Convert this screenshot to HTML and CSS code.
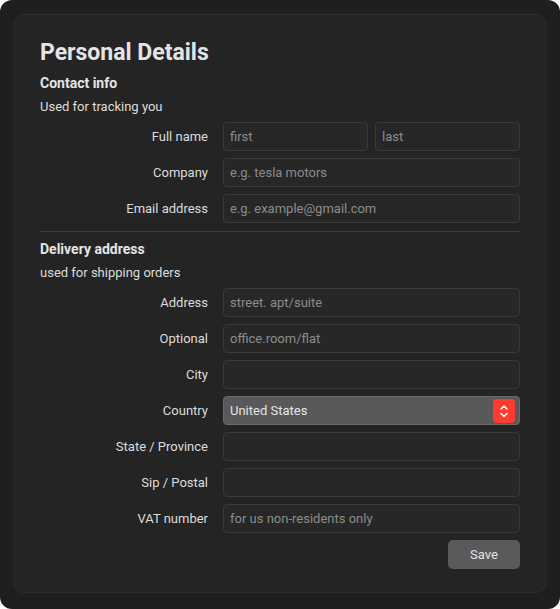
FILE: index.html
```html
<!DOCTYPE html>
<html lang="en">
<head>
    <meta charset="UTF-8">
    <meta name="viewport" content="width=device-width, initial-scale=1.0">
    <title>Personal Details</title>
    <link rel="stylesheet" href="styles.css">
</head>
<body>
    <div class="window">
        <div class="card">
            <h1>Personal Details</h1>

            <h2>Contact info</h2>
            <p class="note">Used for tracking you</p>
            <div class="form-grid">
                <label>Full name</label>
                <div class="pair">
                    <input type="text" placeholder="first">
                    <input type="text" placeholder="last">
                </div>
                <label>Company</label>
                <input type="text" placeholder="e.g. tesla motors">
                <label>Email address</label>
                <input type="text" placeholder="e.g. example@gmail.com">
            </div>

            <hr class="divider">

            <h2>Delivery address</h2>
            <p class="note">used for shipping orders</p>
            <div class="form-grid">
                <label>Address</label>
                <input type="text" placeholder="street. apt/suite">
                <label>Optional</label>
                <input type="text" placeholder="office.room/flat">
                <label>City</label>
                <input type="text">
                <label>Country</label>
                <div class="select">
                    <span>United States</span>
                    <span class="select-arrows">
                        <svg width="22" height="24" viewBox="0 0 22 24">
                            <path d="M8 10 L11 7 L14 10" fill="none" stroke="#fff" stroke-width="1.6" stroke-linecap="round" stroke-linejoin="round"/>
                            <path d="M8 14.5 L11 17.5 L14 14.5" fill="none" stroke="#fff" stroke-width="1.6" stroke-linecap="round" stroke-linejoin="round"/>
                        </svg>
                    </span>
                </div>
                <label>State / Province</label>
                <input type="text">
                <label>Sip / Postal</label>
                <input type="text">
                <label>VAT number</label>
                <input type="text" placeholder="for us non-residents only">
            </div>

            <div class="actions">
                <button>Save</button>
            </div>
        </div>
    </div>
</body>
</html>
```

FILE: styles.css
```css
html, body {
    margin: 0;
    padding: 0;
    background-color: #ffffff;
}

body {
    font-family: Roboto, "Liberation Sans", sans-serif;
    color: #e2e2e2;
}

.window {
    height: 609px;
    box-sizing: border-box;
    padding: 14px;
    background-color: #1f1f1f;
    border-radius: 12px;
}

.card {
    background-color: #242424;
    border: 1px solid #2e2e2e;
    border-radius: 10px;
    padding: 24px 25px 23px 25px;
}

h1 {
    margin: 0;
    font-size: 23px;
    line-height: 28px;
    font-weight: 700;
    color: #e4e4e4;
}

h2 {
    margin: 6px 0 0 0;
    font-size: 14px;
    line-height: 20px;
    font-weight: 700;
    color: #e4e4e4;
}

.divider + h2 {
    margin-top: 7px;
}

.note {
    margin: 5px 0 6px 0;
    font-size: 13px;
    line-height: 18px;
    color: #dcdcdc;
}

.form-grid {
    display: grid;
    grid-template-columns: 168px 1fr;
    column-gap: 15px;
    row-gap: 7px;
    align-items: center;
}

.form-grid label {
    text-align: right;
    font-size: 13px;
    color: #dcdcdc;
}

.pair {
    display: flex;
    gap: 7px;
}

.pair input {
    flex: 1;
    min-width: 0;
}

input {
    box-sizing: border-box;
    height: 29px;
    width: 100%;
    padding: 0 6px;
    font-family: Roboto, "Liberation Sans", sans-serif;
    font-size: 13px;
    color: #e2e2e2;
    background-color: #272727;
    border: 1px solid #3a3a3a;
    border-radius: 4px;
    outline: none;
}

input::placeholder {
    color: #8c8c8c;
}

.select {
    box-sizing: border-box;
    height: 29px;
    display: flex;
    align-items: center;
    justify-content: space-between;
    padding: 0 4px 0 6px;
    font-size: 13px;
    color: #e4e4e4;
    background-color: #595959;
    border: 1px solid #6a6a6a;
    border-radius: 4px;
}

.select-arrows {
    display: flex;
    width: 22px;
    height: 24px;
    background-color: #ff3b30;
    border-radius: 4px;
}

.divider {
    margin: 8px 0 0 0;
    border: none;
    border-top: 1px solid #3a3a3a;
}

.actions {
    display: flex;
    justify-content: flex-end;
    margin-top: 7px;
}

.actions button {
    width: 72px;
    height: 29px;
    font-family: Roboto, "Liberation Sans", sans-serif;
    font-size: 13px;
    color: #e2e2e2;
    background-color: #5a5a5a;
    border: none;
    border-radius: 5px;
    cursor: pointer;
}
```
